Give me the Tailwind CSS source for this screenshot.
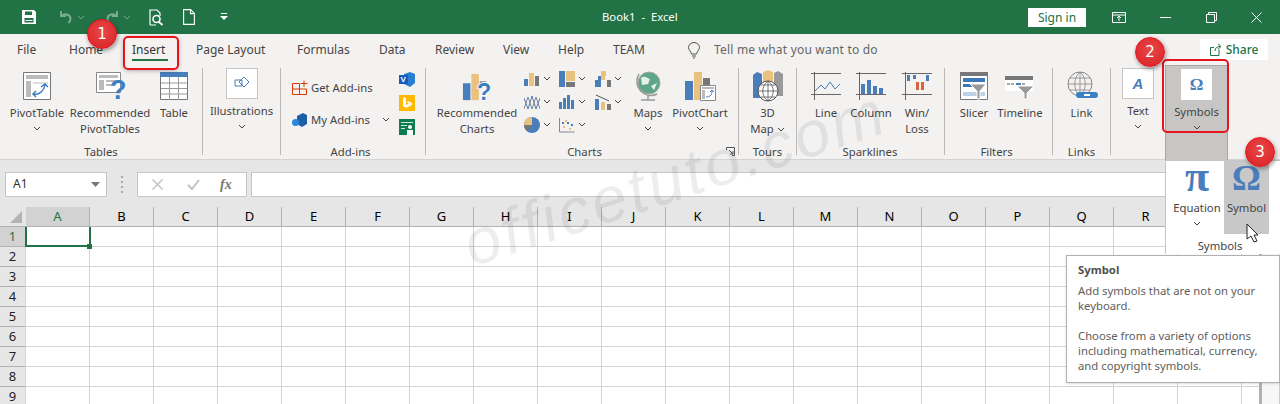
<!DOCTYPE html>
<html lang="en">
  <head>
    <meta charset="UTF-8" />
    <title>Book1 - Excel</title>
    <script src="https://cdn.jsdelivr.net/npm/@tailwindcss/browser@4"></script>
  </head>
  <body class="w-[1280px] h-[404px] overflow-hidden relative bg-white text-[12px] text-[#444] font-['Noto_Sans',sans-serif]">
    <!-- Title bar -->
    <header class="h-[34px] bg-[#217346] flex items-center text-white">
      <div class="flex items-center pl-[21px] w-[602px] gap-[21px]">
        <svg class="w-4 h-4" viewBox="0 0 16 16"><path d="M1 1h12l2 2v12H1z" fill="#fff" /><path d="M4 2.500h7V6H4zM3.500 9h9v4.500h-9z" fill="#217346" /><path d="M4.500 11h7v1h-7z" fill="#fff" /></svg>
        <div class="flex items-center gap-[3px] opacity-40">
          <svg class="w-4 h-4" viewBox="0 0 16 16" fill="none" stroke="#fff" stroke-width="2"><path d="M3 2v5h5M3.500 7c3-3 9-2 9 3 0 2-1 3-2 4" /></svg>
          <svg class="w-2 h-2" viewBox="0 0 8 8" fill="none" stroke="#fff"><path d="M1 3l3 3 3-3" /></svg>
        </div>
        <div class="flex items-center gap-[3px] opacity-40 -ml-[2px]">
          <svg class="w-4 h-4" viewBox="0 0 16 16" fill="none" stroke="#fff" stroke-width="2"><path d="M13 2v5H8M12.500 7c-3-3-9-2-9 3 0 2 1 3 2 4" /></svg>
          <svg class="w-2 h-2" viewBox="0 0 8 8" fill="none" stroke="#fff"><path d="M1 3l3 3 3-3" /></svg>
        </div>
        <svg class="w-[15px] h-[17px] -ml-[3px]" viewBox="0 0 15 17" fill="none" stroke="#fff" stroke-width="1.200"><path d="M1 16V1h7l3 3v3M1 16h6" /><circle cx="7.500" cy="10" r="3.500" stroke-width="1.600" /><path d="M10 13l3.500 3" stroke-width="1.800" /></svg>
        <svg class="w-[12px] h-[16px] -ml-[2px]" viewBox="0 0 12 16" fill="none" stroke="#fff" stroke-width="1.100"><path d="M.6.600h7l3.800 3.800v11H.6zM7.500.6v4h4" /></svg>
        <svg class="w-[8px] h-[8px] ml-[4px]" viewBox="0 0 8 8" fill="#fff"><path d="M1 0h6v1H1zM0 3h8L4 7z" /></svg>
      </div>
      <div class="w-[78px] text-[11.3px] whitespace-nowrap">Book1&nbsp; -&nbsp; Excel</div>
      <div class="flex items-center ml-auto">
        <div class="w-[58px] h-[19px] bg-white text-[#217346] text-[12px] leading-[19px] text-center mr-[26px]">Sign in</div>
        <svg class="w-[14px] h-[11px] mr-[34px]" viewBox="0 0 14 11" fill="none" stroke="#fff"><path d="M.5.500h13v10H.5zM.5 3h13M7 9V4.500M5 6l2-2 2 2" /></svg>
        <div class="w-[11px] h-px bg-white mr-[35px]"></div>
        <svg class="w-[11px] h-[11px] mr-[34px]" viewBox="0 0 11 11" fill="none" stroke="#fff"><path d="M.5 2.500h8v8h-8zM2.500 2.500v-2h8v8h-2" /></svg>
        <svg class="w-[11px] h-[11px] mr-[18px]" viewBox="0 0 11 11" stroke="#fff"><path d="M.5.500l10 10M10.500.5l-10 10" /></svg>
      </div>
    </header>

    <!-- Tabs -->
    <nav class="h-[28px] pt-[4px] bg-[#f3f2f1] flex items-center relative text-[#444] whitespace-nowrap">
      <span class="w-[69px] pl-[17px]">File</span>
      <span class="w-[63px]">Home</span>
      <span class="w-[64px] text-[#333]">Insert</span>
      <span class="w-[101px]">Page Layout</span>
      <span class="w-[82px]">Formulas</span>
      <span class="w-[56px]">Data</span>
      <span class="w-[68px]">Review</span>
      <span class="w-[55px]">View</span>
      <span class="w-[55px]">Help</span>
      <span class="w-[74px]">TEAM</span>
      <svg class="w-[14px] h-[17px] mr-[13px]" viewBox="0 0 14 17" fill="none" stroke="#555"><path d="M4.500 12c0-2-3-4-3-6.500a5.500 5 0 0 1 11 0c0 2.500-3 4.500-3 6.500zM5 14h4M6 16h2" /></svg>
      <span class="text-[#666] tracking-[.2px]">Tell me what you want to do</span>
      <div class="absolute left-[1200px] top-[5px] w-[68px] h-[21px] bg-white rounded-[2px] flex items-center justify-center gap-[4px] text-[#217346] font-medium">
        <svg class="w-[12px] h-[13px]" viewBox="0 0 12 13" fill="none" stroke="#217346"><path d="M9 6.500v6H.5v-8H4M5 8c0-3 2-4.500 5-4.500M8 .8l3 2.700-3 2.700" /></svg>
        Share
      </div>
    </nav>

    <!-- Ribbon -->
    <section class="h-[98px] bg-[#f3f2f1] flex border-b border-[#d4d4d4] leading-[16px] text-[11.3px] text-[#444]">
      <!-- Tables -->
      <div class="w-[203px] mt-[6px] mb-[4px] border-r border-[#b9b9b9] flex flex-col">
        <div class="flex-1 flex pl-[5px]">
          <div class="w-[64px] flex flex-col items-center">
            <svg class="w-[28px] h-[28px] mt-[4px] mb-[5px]" viewBox="0 0 28 28"><path d="M.5.500h27v27H.5z" fill="#fff" stroke="#777" /><path d="M3 3h22v4H3zM3 9h5v16H3z" fill="#bbb" /><path d="M10 10h15v2H10z" fill="#ddd" /><path d="M11 22c5 1 10-3 11-9M18 15l4-3 3 3M13 19l-3 3 3 3" fill="none" stroke="#3b7fc1" stroke-width="1.500" /></svg>
            <span>PivotTable</span>
            <svg class="w-[8px] h-[16px]" viewBox="0 0 8 16" fill="none" stroke="#444"><path d="M1 6l3 3 3-3" /></svg>
          </div>
          <div class="w-[82px] flex flex-col items-center">
            <svg class="w-[30px] h-[28px] mt-[4px] mb-[5px] translate-x-[1px]" viewBox="0 0 30 28"><path d="M.5.500h24v20H.5z" fill="#fff" stroke="#888" /><path d="M3 3h19v3H3zM3 8h5v10H3zM10 8h12v2H10zM10 12h6v2H10z" fill="#bbb" /><text x="14" y="27" font-family="Liberation Sans" font-weight="700" font-size="27" fill="#3b7fc1">?</text></svg>
            <span>Recommended</span>
            <span>PivotTables</span>
          </div>
          <div class="w-[46px] flex flex-col items-center">
            <svg class="w-[28px] h-[28px] mt-[4px] mb-[5px]" viewBox="0 0 28 28"><path d="M.5.500h27v27H.5z" fill="#fff" stroke="#777" /><path d="M0 0h28v5H0z" fill="#4a7ebb" /><path d="M1 11h26M1 16.500h26M1 22h26M9.500 5v23M18.500 5v23" stroke="#999" /></svg>
            <span>Table</span>
          </div>
        </div>
        <div class="text-center h-[6px] leading-[6px]">Tables</div>
      </div>
      <!-- Illustrations -->
      <div class="w-[78px] mt-[6px] mb-[4px] border-r border-[#b9b9b9] flex flex-col items-center">
        <div class="w-[32px] h-[31px] bg-white border border-[#c8c6c4] flex items-center justify-center">
          <svg class="w-[16px] h-[16px]" viewBox="0 0 16 16" fill="none" stroke="#4a7ebb"><path d="M1 4h7v6H1zM10 1l5 5-5 5-5-5z" fill="#fff" /></svg>
        </div>
        <span class="mt-[4px]">Illustrations</span>
        <svg class="w-[8px] h-[16px]" viewBox="0 0 8 16" fill="none" stroke="#444"><path d="M1 6l3 3 3-3" /></svg>
      </div>
      <!-- Add-ins -->
      <div class="w-[145px] mt-[6px] mb-[4px] border-r border-[#b9b9b9] flex flex-col">
        <div class="flex-1 flex pl-[11px]">
          <div class="w-[107px] flex flex-col gap-[16px] mt-[12px]">
            <div class="flex items-center gap-[3px]">
              <svg class="w-[16px] h-[16px]" viewBox="0 0 16 16" fill="none" stroke="#d83b01"><path d="M.5 3.500h7V9h7v5.500H.5zM7.500 9v5.500M.5 9h7M12 .5v6.500M8.500 3.500h7" /></svg>
              <span>Get Add-ins</span>
            </div>
            <div class="flex items-center gap-[3px]">
              <svg class="w-[16px] h-[16px]" viewBox="0 0 16 16"><path d="M5 4l6-3 4 2v9l-5 3-5-3z" fill="#1a5fa8" /><circle cx="3.500" cy="10.500" r="3.500" fill="#2b88d8" /></svg>
              <span>My Add-ins</span>
              <svg class="w-[8px] h-[8px] ml-[9px]" viewBox="0 0 8 8" fill="none" stroke="#444"><path d="M1 2l3 3 3-3" /></svg>
            </div>
          </div>
          <div class="w-[16px] flex flex-col gap-[8px] mt-[4px]">
            <svg class="w-[16px] h-[15px]" viewBox="0 0 16 15"><path d="M5 2l6-2 5 2v9l-5 4-6-3z" fill="#2b7cd3" /><path d="M0 3h9v9H0z" fill="#185abd" /><text x="1.500" y="10" font-family="Liberation Sans" font-size="8" font-weight="700" fill="#fff">V</text></svg>
            <svg class="w-[16px] h-[16px]" viewBox="0 0 16 16"><path d="M0 0h16v16H0z" fill="#ffb900" /><path d="M4 2l3 1v7l3-1.500-2-1 1-1.500 4 2v2l-6 3-3-2z" fill="#fff" /></svg>
            <svg class="w-[16px] h-[16px]" viewBox="0 0 16 16"><path d="M0 0h16v16H0z" fill="#0f7b50" /><path d="M2 3h12v1H2zM2 6h6v1H2zM2 9h4v1H2z" fill="#cde6da" /><circle cx="11" cy="8" r="2" fill="#fff" /><path d="M8 16v-5h6v5z" fill="#fff" /></svg>
          </div>
        </div>
        <div class="text-center h-[6px] leading-[6px] pr-[5px]">Add-ins</div>
      </div>
      <!-- Charts -->
      <div class="w-[313px] mt-[6px] mb-[4px] border-r border-[#b9b9b9] flex flex-col relative">
        <div class="flex-1 flex pl-[9px]">
          <div class="w-[84px] flex flex-col items-center">
            <svg class="w-[30px] h-[30px] mt-[4px] mb-[3px]" viewBox="0 0 30 32"><path d="M0 12h8v18H0z" fill="#4a7ebb" /><path d="M9 2h8v28H9z" fill="#e8c27e" /><path d="M18 10h7v4h-7z" fill="#777" /><text x="15" y="30" font-family="Liberation Sans" font-weight="700" font-size="25" fill="#fff" stroke="#fff" stroke-width="2">?</text><text x="15" y="30" font-family="Liberation Sans" font-weight="700" font-size="25" fill="#3b7fc1">?</text></svg>
            <span>Recommended</span>
            <span>Charts</span>
          </div>
          <!-- small chart buttons -->
          <div class="w-[35px] ml-[5px] flex flex-col gap-[7px] mt-[3px]">
            <div class="flex items-center gap-[3px]">
              <svg class="w-[16px] h-[16px]" viewBox="0 0 16 16"><path d="M0 8h4v7H0z" fill="#4a7ebb" /><path d="M5 2h5v13H5z" fill="#e8c27e" /><path d="M11 5h4v10h-4z" fill="#777" /></svg>
              <svg class="w-[8px] h-[8px]" viewBox="0 0 8 8" fill="none" stroke="#444"><path d="M1 2l3 3 3-3" /></svg>
            </div>
            <div class="flex items-center gap-[3px]">
              <svg class="w-[16px] h-[16px]" viewBox="0 0 16 16" fill="none"><path d="M0 4l4 11 4-13 4 13 4-11" stroke="#4a7ebb" /><path d="M0 15L4 3l4 12 4-12 4 12" stroke="#888" /></svg>
              <svg class="w-[8px] h-[8px]" viewBox="0 0 8 8" fill="none" stroke="#444"><path d="M1 2l3 3 3-3" /></svg>
            </div>
            <div class="flex items-center gap-[3px]">
              <svg class="w-[16px] h-[16px]" viewBox="0 0 16 16"><circle cx="8" cy="8" r="8" fill="#4a7ebb" /><path d="M8 8V0a8 8 0 0 0-8 8z" fill="#e8c27e" /><path d="M8 8H0a8 8 0 0 0 3 6z" fill="#777" /></svg>
              <svg class="w-[8px] h-[8px]" viewBox="0 0 8 8" fill="none" stroke="#444"><path d="M1 2l3 3 3-3" /></svg>
            </div>
          </div>
          <div class="w-[36px] flex flex-col gap-[7px] mt-[3px]">
            <div class="flex items-center gap-[3px]">
              <svg class="w-[16px] h-[16px]" viewBox="0 0 16 16"><path d="M0 0h6v16H0z" fill="#4a7ebb" /><path d="M7 0h9v10H7z" fill="#e8c27e" /><path d="M7 11h9v5H7z" fill="#777" /></svg>
              <svg class="w-[8px] h-[8px]" viewBox="0 0 8 8" fill="none" stroke="#444"><path d="M1 2l3 3 3-3" /></svg>
            </div>
            <div class="flex items-center gap-[3px]">
              <svg class="w-[16px] h-[16px]" viewBox="0 0 16 16" fill="#4a7ebb"><path d="M0 8h3v7H0zM4 4h3v11H4zM8 1h3v14H8zM12 6h3v9h-3z" /></svg>
              <svg class="w-[8px] h-[8px]" viewBox="0 0 8 8" fill="none" stroke="#444"><path d="M1 2l3 3 3-3" /></svg>
            </div>
            <div class="flex items-center gap-[3px]">
              <svg class="w-[16px] h-[16px]" viewBox="0 0 16 16" fill="none"><path d="M.5 1v14h15" stroke="#888" /><path d="M4 9h2v2H4zM10 11h2v2h-2z" fill="#e8c27e" /><path d="M3 5h2v2H3zM8 5h2v2H8zM12 7h2v2h-2z" fill="#4a7ebb" /><path d="M6 3h2v2H6z" fill="#e8c27e" /></svg>
              <svg class="w-[8px] h-[8px]" viewBox="0 0 8 8" fill="none" stroke="#444"><path d="M1 2l3 3 3-3" /></svg>
            </div>
          </div>
          <div class="w-[33px] flex flex-col gap-[7px] mt-[3px]">
            <div class="flex items-center gap-[3px]">
              <svg class="w-[16px] h-[16px]" viewBox="0 0 16 16"><path d="M0 9h3V5h3v11H0z" fill="#4a7ebb" /><path d="M6 0h4v9H6zM8 0h3v5H8z" fill="#e8c27e" /><path d="M12 9h4v7h-4z" fill="#777" /></svg>
              <svg class="w-[8px] h-[8px]" viewBox="0 0 8 8" fill="none" stroke="#444"><path d="M1 2l3 3 3-3" /></svg>
            </div>
            <div class="flex items-center gap-[3px]">
              <svg class="w-[16px] h-[16px]" viewBox="0 0 16 16"><path d="M0 5h4v11H0z" fill="#4a7ebb" /><path d="M6 8h4v8H6z" fill="#e8c27e" /><path d="M12 10h4v6h-4z" fill="#777" /><path d="M1 1l13 6" stroke="#555" fill="none" /></svg>
              <svg class="w-[8px] h-[8px]" viewBox="0 0 8 8" fill="none" stroke="#444"><path d="M1 2l3 3 3-3" /></svg>
            </div>
          </div>
          <div class="w-[44px] -ml-[2px] flex flex-col items-center">
            <svg class="w-[26px] h-[32px] mt-[2px] mb-[3px]" viewBox="0 0 26 32"><circle cx="14" cy="13" r="11" fill="#5fa58a" stroke="#aaa" /><path d="M6 8c4-3 6 0 9 1l-2 5-6 1zM16 16l6-3-3 7z" fill="#e6efe9" /><path d="M4 4a14 14 0 0 0 18 20M6 30h14M13 26v4" fill="none" stroke="#999" stroke-width="1.500" /></svg>
            <span>Maps</span>
            <svg class="w-[8px] h-[16px]" viewBox="0 0 8 16" fill="none" stroke="#444"><path d="M1 6l3 3 3-3" /></svg>
          </div>
          <div class="w-[60px] flex flex-col items-center">
            <svg class="w-[31px] h-[32px] mt-[2px] mb-[3px]" viewBox="0 0 31 32"><path d="M0 11h8v19H0z" fill="#4a7ebb" /><path d="M9 2h8v28H9z" fill="#e8c27e" /><path d="M18 8h7v9h-7z" fill="#777" /><path d="M15.500 15.500h15v15h-15z" fill="#fff" stroke="#888" /><path d="M17 17h12v2H17zM17 20h3v9h-3z" fill="#bbb" /><path d="M21 27c4 0 6-2 6-6M25 22l2-2 2 2" stroke="#3b7fc1" fill="none" /></svg>
            <span>PivotChart</span>
            <svg class="w-[8px] h-[16px]" viewBox="0 0 8 16" fill="none" stroke="#444"><path d="M1 6l3 3 3-3" /></svg>
          </div>
        </div>
        <div class="text-center h-[6px] leading-[6px] pl-[5px]">Charts</div>
        <svg class="absolute right-[3px] bottom-[-1px] w-[9px] h-[9px]" viewBox="0 0 9 9" fill="none" stroke="#555"><path d="M.5 3V.5h8v8H6M3 3l4 4M7 4v3H4" /></svg>
      </div>
      <!-- Tours -->
      <div class="w-[58px] mt-[6px] mb-[4px] border-r border-[#b9b9b9] flex flex-col">
        <div class="flex-1 flex flex-col items-center">
          <svg class="w-[30px] h-[32px] mt-[2px] mb-[3px]" viewBox="0 0 30 32"><path d="M0 5l4-3 5 2v24H0z" fill="#4a7ebb" /><path d="M10 2l5-2 5 2v12H10z" fill="#e8c27e" /><path d="M21 3l4-2 5 3v22h-9z" fill="#999" /><circle cx="15" cy="21" r="10" fill="#fff" stroke="#555" /><path d="M5 21h20M15 11v20M8 15h14M8 27h14M15 11c-7 5-7 15 0 20M15 11c7 5 7 15 0 20" fill="none" stroke="#555" stroke-width=".8" /></svg>
          <span>3D</span>
          <span>Map <svg class="inline w-[8px] h-[8px]" viewBox="0 0 8 8" fill="none" stroke="#444"><path d="M1 2l3 3 3-3" /></svg></span>
        </div>
        <div class="text-center h-[6px] leading-[6px]">Tours</div>
      </div>
      <!-- Sparklines -->
      <div class="w-[148px] mt-[6px] mb-[4px] border-r border-[#b9b9b9] flex flex-col">
        <div class="flex-1 flex pl-[7px]">
          <div class="w-[44px] flex flex-col items-center">
            <svg class="w-[30px] h-[28px] mt-[4px] mb-[5px]" viewBox="0 0 30 28" fill="none"><path d="M0 1.500h30M0 22.500h30M3.500 0v28" stroke="#666" /><path d="M4 19l6-6 4 4 5-7 5 7 5-5" stroke="#4a7ebb" /></svg>
            <span>Line</span>
          </div>
          <div class="w-[46px] flex flex-col items-center">
            <svg class="w-[30px] h-[28px] mt-[4px] mb-[5px]" viewBox="0 0 30 28"><path d="M0 1.500h30M0 22.500h30M3.500 0v28" stroke="#666" fill="none" /><path d="M5 12h4v10H5zM11 8h4v14h-4zM17 14h4v8h-4zM23 16h4v6h-4z" fill="#4a7ebb" /></svg>
            <span>Column</span>
          </div>
          <div class="w-[46px] flex flex-col items-center">
            <svg class="w-[30px] h-[28px] mt-[4px] mb-[5px]" viewBox="0 0 30 28"><path d="M0 1.500h30M0 22.500h30M3.500 0v28" stroke="#666" fill="none" /><path d="M5 3h3v6H5zM11 3h3v4h-3zM24 3h3v6h-3z" fill="#4a7ebb" /><path d="M14 10h3v8h-3zM19 10h3v8h-3z" fill="#d9633c" /></svg>
            <span>Win/</span>
            <span>Loss</span>
          </div>
        </div>
        <div class="text-center h-[6px] leading-[6px] -ml-[1px]">Sparklines</div>
      </div>
      <!-- Filters -->
      <div class="w-[108px] mt-[6px] mb-[4px] border-r border-[#b9b9b9] flex flex-col">
        <div class="flex-1 flex pl-[4px]">
          <div class="w-[50px] flex flex-col items-center">
            <svg class="w-[28px] h-[28px] mt-[4px] mb-[5px]" viewBox="0 0 28 28"><path d="M.5.500h27v27H.5z" fill="#fff" stroke="#777" /><path d="M0 0h28v4H0z" fill="#777" /><path d="M3 6h22v4H3zM3 12h9v3H3z" fill="#3f79b5" /><path d="M3 20h22v4H3z" fill="#bcd0e6" /><path d="M10 12h16l-6 7v8h-3v-8z" fill="#999" stroke="#fff" /></svg>
            <span>Slicer</span>
          </div>
          <div class="w-[42px] flex flex-col items-center">
            <svg class="w-[30px] h-[28px] mt-[4px] mb-[5px]" viewBox="0 0 30 28"><path d="M0 4h28v15H0z" fill="#fff" /><path d="M0 4h28v4H0z" fill="#777" /><path d="M2 11h3v2H2zM6 11h3v2H6zM17 11h3v2h-3z" fill="#aaa" /><path d="M11 11h5v2h-5z" fill="#4a7ebb" /><path d="M12 14h17l-7 7v6h-3v-6z" fill="#999" stroke="#fff" /></svg>
            <span>Timeline</span>
          </div>
        </div>
        <div class="text-center h-[6px] leading-[6px] -ml-[4px]">Filters</div>
      </div>
      <!-- Links -->
      <div class="w-[58px] mt-[6px] mb-[4px] border-r border-[#b9b9b9] flex flex-col">
        <div class="flex-1 flex flex-col items-center">
          <svg class="w-[32px] h-[32px] mt-[2px] mb-[3px]" viewBox="0 0 32 32" fill="none"><circle cx="14" cy="14" r="12" stroke="#888" /><path d="M2 14h24M14 2v24M4 8h20M4 20h20M14 2c-7 6-7 18 0 24M14 2c7 6 7 18 0 24" stroke="#888" stroke-width=".8" /><path d="M13 25h10M20 25h9" stroke="#3b7fc1" stroke-width="6" stroke-linecap="round" /><path d="M18 25h6" stroke="#fff" stroke-width="2" /></svg>
          <span>Link</span>
        </div>
        <div class="text-center h-[6px] leading-[6px]">Links</div>
      </div>
      <!-- Text -->
      <div class="w-[54px] pt-[6px] flex flex-col items-center">
        <div class="w-[32px] h-[31px] bg-white border border-[#c8c6c4] flex items-center justify-center font-['Liberation_Sans',sans-serif] italic font-bold text-[#4a7ebb] text-[15px]">A</div>
        <span class="mt-[4px]">Text</span>
        <svg class="w-[8px] h-[16px]" viewBox="0 0 8 16" fill="none" stroke="#444"><path d="M1 6l3 3 3-3" /></svg>
      </div>
      <!-- Symbols, opened -->
      <div class="w-[63px] h-[98px] mt-[3px] bg-[#c8c6c4] border-x border-t border-[#a8a6a4] flex flex-col items-center">
        <div class="w-[31px] h-[31px] mt-[3px] bg-white flex items-center justify-center font-['Liberation_Serif',serif] font-bold text-[#4a7ebb] text-[17px]">Ω</div>
        <span class="mt-[4px]">Symbols</span>
        <svg class="w-[8px] h-[16px]" viewBox="0 0 8 16" fill="none" stroke="#444"><path d="M1 6l3 3 3-3" /></svg>
      </div>
    </section>

    <!-- Formula bar -->
    <section class="h-[47px] bg-[#e6e6e6] flex items-center pl-[5px] pt-px">
      <div class="w-[102px] h-[25px] bg-white border border-[#c6c6c6] flex items-center justify-between pl-[7px] pr-[6px] text-[#333]">
        A1
        <svg class="w-[9px] h-[5px]" viewBox="0 0 9 5" fill="#777"><path d="M0 0h9L4.500 5z" /></svg>
      </div>
      <div class="w-[30px] flex flex-col items-center gap-[3px]"><i class="w-[2px] h-[2px] bg-[#aaa]"></i><i class="w-[2px] h-[2px] bg-[#aaa]"></i><i class="w-[2px] h-[2px] bg-[#aaa]"></i><i class="w-[2px] h-[2px] bg-[#aaa]"></i></div>
      <div class="w-[110px] h-[25px] bg-white border border-[#c6c6c6] flex items-center pl-[14px]">
        <svg class="w-[11px] h-[11px] mr-[24px]" viewBox="0 0 11 11" stroke="#c2c2c2" stroke-width="1.500"><path d="M.5.500l10 10M10.500.5l-10 10" /></svg>
        <svg class="w-[13px] h-[11px] mr-[20px]" viewBox="0 0 13 11" fill="none" stroke="#c2c2c2" stroke-width="2"><path d="M1 6l4 4 7-9" /></svg>
        <span class="font-['Liberation_Serif',serif] italic font-bold text-[14px] text-[#777]">fx</span>
      </div>
      <div class="ml-[4px] flex-1 h-[25px] bg-white border border-[#c6c6c6]"></div>
    </section>

    <!-- Column headers -->
    <div class="h-[19px] bg-[#e6e6e6] flex text-[13px] leading-[19px] text-black border-b border-[#b1b1b1] box-content">
      <div class="w-[26px] flex items-end justify-end pr-[4px] pb-[3px]"><i class="border-l-[12px] border-b-[12px] border-l-transparent border-b-[#b4b4b4]"></i></div>
      <div class="w-[64px] text-center bg-[#d2d2d2] text-[#217346] border-r border-[#b1b1b1]">A</div>
      <div class="w-[64px] text-center border-r border-[#b1b1b1]">B</div>
      <div class="w-[64px] text-center border-r border-[#b1b1b1]">C</div>
      <div class="w-[64px] text-center border-r border-[#b1b1b1]">D</div>
      <div class="w-[64px] text-center border-r border-[#b1b1b1]">E</div>
      <div class="w-[64px] text-center border-r border-[#b1b1b1]">F</div>
      <div class="w-[64px] text-center border-r border-[#b1b1b1]">G</div>
      <div class="w-[64px] text-center border-r border-[#b1b1b1]">H</div>
      <div class="w-[64px] text-center border-r border-[#b1b1b1]">I</div>
      <div class="w-[64px] text-center border-r border-[#b1b1b1]">J</div>
      <div class="w-[64px] text-center border-r border-[#b1b1b1]">K</div>
      <div class="w-[64px] text-center border-r border-[#b1b1b1]">L</div>
      <div class="w-[64px] text-center border-r border-[#b1b1b1]">M</div>
      <div class="w-[64px] text-center border-r border-[#b1b1b1]">N</div>
      <div class="w-[64px] text-center border-r border-[#b1b1b1]">O</div>
      <div class="w-[64px] text-center border-r border-[#b1b1b1]">P</div>
      <div class="w-[64px] text-center border-r border-[#b1b1b1]">Q</div>
      <div class="w-[64px] text-center border-r border-[#b1b1b1]">R</div>
      <div class="w-[64px] text-center border-r border-[#b1b1b1]">S</div>
    </div>

    <!-- Sheet -->
    <div class="flex h-[178px] overflow-hidden">
      <div class="w-[25px] bg-[#e6e6e6] text-[13px] text-[#222] text-center leading-[19px] border-r border-[#b1b1b1] box-content">
        <div class="h-[20px] bg-[#d2d2d2] text-[#217346] border-b border-[#b1b1b1]">1</div>
        <div class="h-[20px] border-b border-[#b1b1b1]">2</div>
        <div class="h-[20px] border-b border-[#b1b1b1]">3</div>
        <div class="h-[20px] border-b border-[#b1b1b1]">4</div>
        <div class="h-[20px] border-b border-[#b1b1b1]">5</div>
        <div class="h-[20px] border-b border-[#b1b1b1]">6</div>
        <div class="h-[20px] border-b border-[#b1b1b1]">7</div>
        <div class="h-[20px] border-b border-[#b1b1b1]">8</div>
        <div class="h-[20px] border-b border-[#b1b1b1]">9</div>
      </div>
      <div class="flex-1 -ml-px relative bg-[linear-gradient(#d4d4d4_1px,transparent_1px),linear-gradient(90deg,#d4d4d4_1px,transparent_1px)] bg-[size:64px_20px] bg-[position:0_19px]">
        <div class="absolute left-0 top-[-2px] w-[66px] h-[22px] border-2 border-[#217346]"></div>
        <div class="absolute left-[62px] top-[17px] w-[5px] h-[5px] bg-[#217346]"></div>
      </div>
      <div class="w-[21px] bg-[#f7f7f7] border-l-[3px] border-r border-l-[#b1b1b1] border-r-[#cccccc]"></div>
    </div>

    <!-- Watermark -->
    <div class="absolute left-[440px] top-[145px] w-[470px] text-center text-[64px] leading-[66px] tracking-[3px] italic font-['Liberation_Sans',sans-serif] text-black/[0.07] -rotate-[18deg] pointer-events-none whitespace-nowrap">officetuto.com</div>

    <!-- Symbols dropdown -->
    <div class="absolute left-[1165px] top-[160px] w-[115px] h-[94px] bg-white border-l border-t border-[#c6c6c6] text-[11.3px] flex flex-col">
      <div class="flex-1 flex">
        <div class="w-[58px] pl-[4px] flex flex-col items-center">
          <span class="font-['Liberation_Serif',serif] font-bold text-[44px] leading-[32px] text-[#4a7ebb] h-[36px]">π</span>
          <span class="text-[#444] mt-[3px] leading-[16px]">Equation</span>
          <svg class="w-[8px] h-[16px]" viewBox="0 0 8 16" fill="none" stroke="#444"><path d="M1 6l3 3 3-3" /></svg>
        </div>
        <div class="w-[45px] h-[73px] bg-[#c8c8c8] flex flex-col items-center">
          <span class="font-['Liberation_Serif',serif] font-bold text-[36px] leading-[34px] text-[#4a7ebb] h-[36px]">Ω</span>
          <span class="text-[#444] mt-[3px] leading-[16px]">Symbol</span>
        </div>
      </div>
      <div class="text-center h-[16px] leading-[16px] pr-[6px] text-[#444]">Symbols</div>
    </div>

    <!-- Tooltip -->
    <div class="absolute left-[1066px] top-[255px] w-[214px] h-[128px] bg-white border border-[#b0b0b0] shadow-sm pl-[11px] pt-[5px] text-[11.3px] text-[#605e5c] leading-[15px] z-10">
      <div class="font-bold text-[#505050] mb-[6px] leading-[15px] mt-[1px]">Symbol</div>
      <p>Add symbols that are not on your<br />keyboard.</p>
      <p class="mt-[15px]">Choose from a variety of options<br />including mathematical, currency,<br />and copyright symbols.</p>
    </div>

    <!-- Mouse cursor -->
    <svg class="absolute left-[1246px] top-[223px] w-[13px] h-[20px] z-20" viewBox="0 0 13 20"><path d="M1 1v15l4-3 3 6 3-1-3-6h4z" fill="#fff" stroke="#222" /></svg>

    <!-- Red annotations -->
    <div class="absolute left-[123px] top-[36px] w-[56px] h-[34px] border-2 border-[#e8141c] rounded-[5px] shadow-[0_1px_4px_#0004]"></div>
    <div class="absolute left-[132px] top-[59px] w-[36px] h-[2px] bg-[#217346]"></div>
    <div class="absolute left-[1162px] top-[59px] w-[67px] h-[74px] border-2 border-[#e8141c] rounded-[5px]"></div>
    <div class="absolute left-[87px] top-[19px] w-[30px] h-[30px] rounded-full bg-[radial-gradient(circle_at_50%_40%,#e8484a,#d91f22)] border border-[#e8141c] shadow-[1px_2px_4px_#0006] text-white text-center text-[15px] leading-[28px] font-['DejaVu_Sans',sans-serif] z-30">1</div>
    <div class="absolute left-[1135px] top-[37px] w-[30px] h-[30px] rounded-full bg-[radial-gradient(circle_at_50%_40%,#e8484a,#d91f22)] border border-[#e8141c] shadow-[1px_2px_4px_#0006] text-white text-center text-[15px] leading-[28px] font-['DejaVu_Sans',sans-serif] z-30">2</div>
    <div class="absolute left-[1245px] top-[137px] w-[30px] h-[30px] rounded-full bg-[radial-gradient(circle_at_50%_40%,#e8484a,#d91f22)] border border-[#e8141c] shadow-[1px_2px_4px_#0006] text-white text-center text-[15px] leading-[28px] font-['DejaVu_Sans',sans-serif] z-30">3</div>
  </body>
</html>
